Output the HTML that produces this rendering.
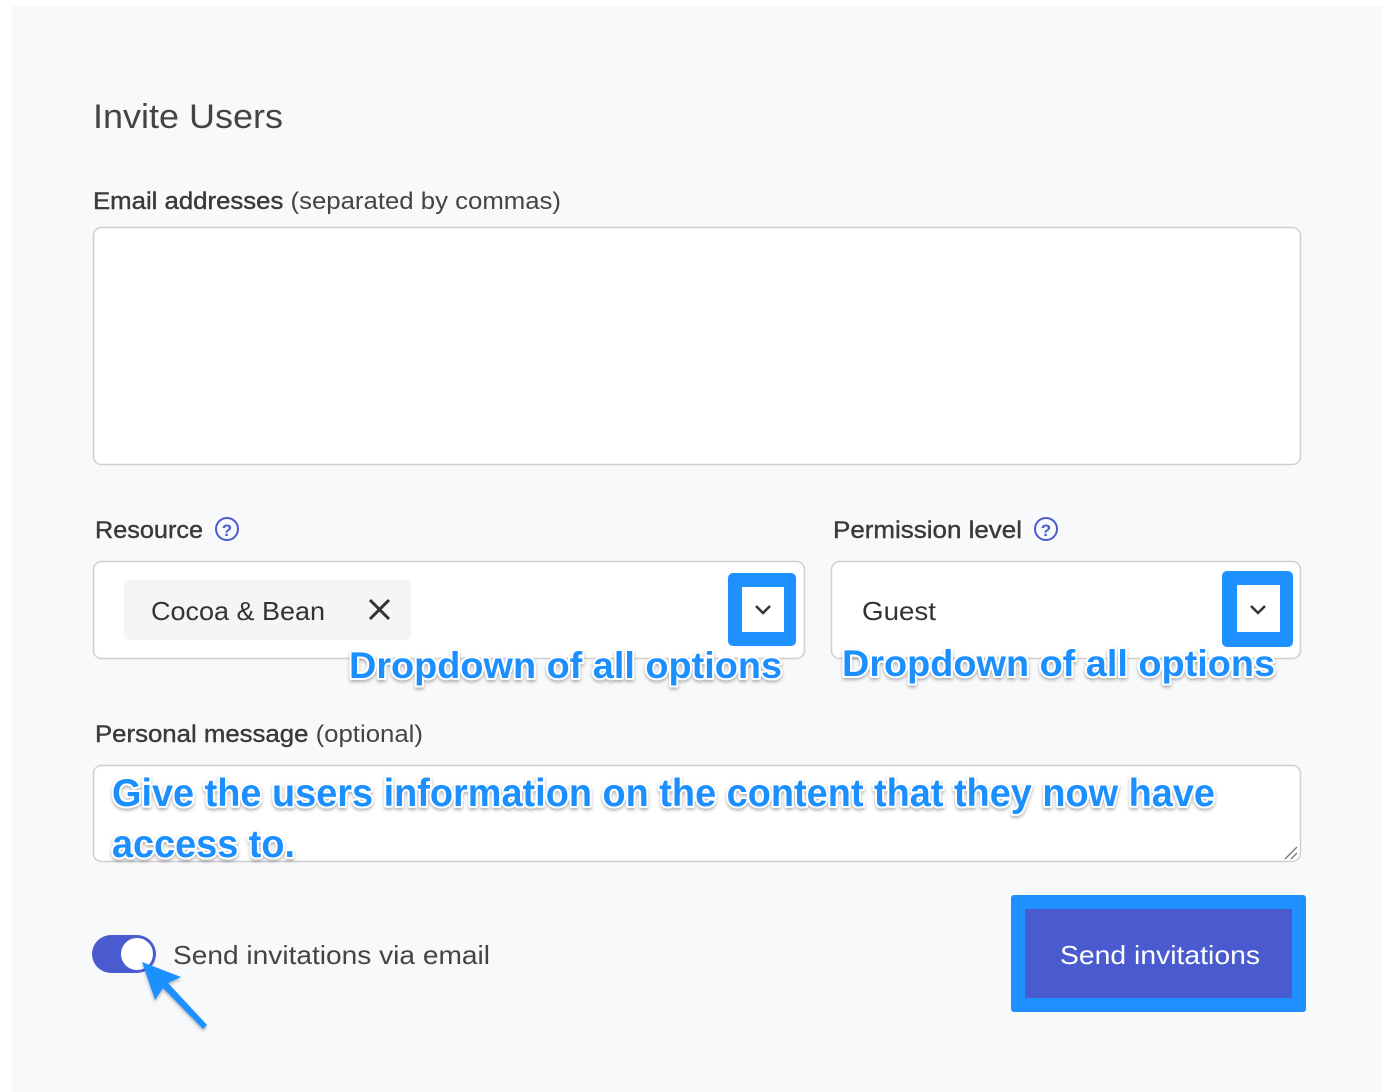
<!DOCTYPE html>
<html><head><meta charset="utf-8"><style>
html,body{margin:0;padding:0;background:#fff;width:1392px;height:1092px;overflow:hidden}
svg{display:block}
text{font-family:"Liberation Sans",Arial,sans-serif}
.ann{font-weight:bold;fill:#1e8fff;stroke:#fff;stroke-width:4;paint-order:stroke;stroke-linejoin:round}
</style></head><body>
<svg width="1392" height="1092" viewBox="0 0 1392 1092" xmlns="http://www.w3.org/2000/svg">
<defs><filter id="sh" x="-5%" y="-20%" width="110%" height="150%"><feDropShadow dx="0" dy="2" stdDeviation="1.5" flood-color="#000" flood-opacity="0.3"/></filter></defs>
<rect x="12" y="6" width="1370" height="1086" fill="#f8f9fb"/>
<text x="93" y="128" font-size="34" fill="#444" textLength="190" lengthAdjust="spacingAndGlyphs">Invite Users</text>
<text x="93" y="209" font-size="24" fill="#444" textLength="468" lengthAdjust="spacingAndGlyphs"><tspan fill="#3a3a3a" stroke="#3a3a3a" stroke-width="0.4">Email addresses</tspan> (separated by commas)</text>
<rect x="93.5" y="227.5" width="1207" height="237" rx="8" fill="#fff" stroke="#cfcfcf" stroke-width="1.5"/>

<text x="95" y="538" font-size="24" fill="#3a3a3a" stroke="#3a3a3a" stroke-width="0.4" textLength="108" lengthAdjust="spacingAndGlyphs">Resource</text>
<circle cx="227" cy="529" r="11" fill="none" stroke="#4a5bd0" stroke-width="2"/>
<text x="227" y="536" font-size="17" fill="#4a5bd0" text-anchor="middle" font-weight="bold">?</text>
<text x="833" y="538" font-size="24" fill="#3a3a3a" stroke="#3a3a3a" stroke-width="0.4" textLength="189" lengthAdjust="spacingAndGlyphs">Permission level</text>
<circle cx="1046" cy="529" r="11" fill="none" stroke="#4a5bd0" stroke-width="2"/>
<text x="1046" y="536" font-size="17" fill="#4a5bd0" text-anchor="middle" font-weight="bold">?</text>

<rect x="93.5" y="561.5" width="711" height="97" rx="8" fill="#fff" stroke="#cfcfcf" stroke-width="1.5"/>
<rect x="124" y="580" width="287" height="60" rx="5" fill="#f4f5f7"/>
<text x="151" y="620" font-size="26" fill="#333" textLength="174" lengthAdjust="spacingAndGlyphs">Cocoa &amp; Bean</text>
<path d="M370 600L389 619M389 600L370 619" stroke="#333" stroke-width="3"/>
<rect x="728" y="573" width="68" height="73" rx="5" fill="#1e90ff"/>
<rect x="742" y="587" width="42" height="45" fill="#fff"/>
<path d="M756 606L763 613L770 606" fill="none" stroke="#333" stroke-width="2.5"/>

<rect x="831.5" y="561.5" width="469" height="97" rx="8" fill="#fff" stroke="#cfcfcf" stroke-width="1.5"/>
<text x="862" y="620" font-size="26" fill="#333" textLength="74" lengthAdjust="spacingAndGlyphs">Guest</text>
<rect x="1222" y="571" width="71" height="76" rx="5" fill="#1e90ff"/>
<rect x="1237" y="585" width="43" height="47" fill="#fff"/>
<path d="M1251 606L1258 613L1265 606" fill="none" stroke="#333" stroke-width="2.5"/>

<g filter="url(#sh)">
<text class="ann" x="349" y="678" font-size="37" textLength="433" lengthAdjust="spacingAndGlyphs">Dropdown of all options</text>
<text class="ann" x="842" y="676" font-size="37" textLength="433" lengthAdjust="spacingAndGlyphs">Dropdown of all options</text>
</g>

<text x="95" y="742" font-size="24" fill="#444" textLength="328" lengthAdjust="spacingAndGlyphs"><tspan fill="#3a3a3a" stroke="#3a3a3a" stroke-width="0.4">Personal message</tspan> (optional)</text>
<rect x="93.5" y="765.5" width="1207" height="96" rx="8" fill="#fff" stroke="#cfcfcf" stroke-width="1.5"/>
<path d="M1285 859L1297 847M1291 859L1297 853" stroke="#777" stroke-width="1.3"/>
<g filter="url(#sh)">
<text class="ann" x="112" y="806" font-size="39" textLength="1103" lengthAdjust="spacingAndGlyphs">Give the users information on the content that they now have</text>
<text class="ann" x="112" y="857" font-size="39" textLength="183" lengthAdjust="spacingAndGlyphs">access to.</text>
</g>

<rect x="92" y="935" width="64" height="38" rx="19" fill="#4a5bd0"/>
<circle cx="137" cy="954" r="17" fill="#fff" stroke="#4a5bd0" stroke-width="2"/>
<text x="173" y="964" font-size="26" fill="#444" textLength="317" lengthAdjust="spacingAndGlyphs">Send invitations via email</text>
<path d="M142 962L181 977L168 983L207 1025L203 1029L163 988L155 1000Z" fill="#1e90ff" filter="url(#sh)"/>

<rect x="1011" y="895" width="295" height="117" rx="3" fill="#1e90ff"/>
<rect x="1025" y="909" width="267" height="89" fill="#4a5bcf"/>
<text x="1060" y="964" font-size="26" fill="#fff" textLength="200" lengthAdjust="spacingAndGlyphs">Send invitations</text>
</svg>
</body></html>
